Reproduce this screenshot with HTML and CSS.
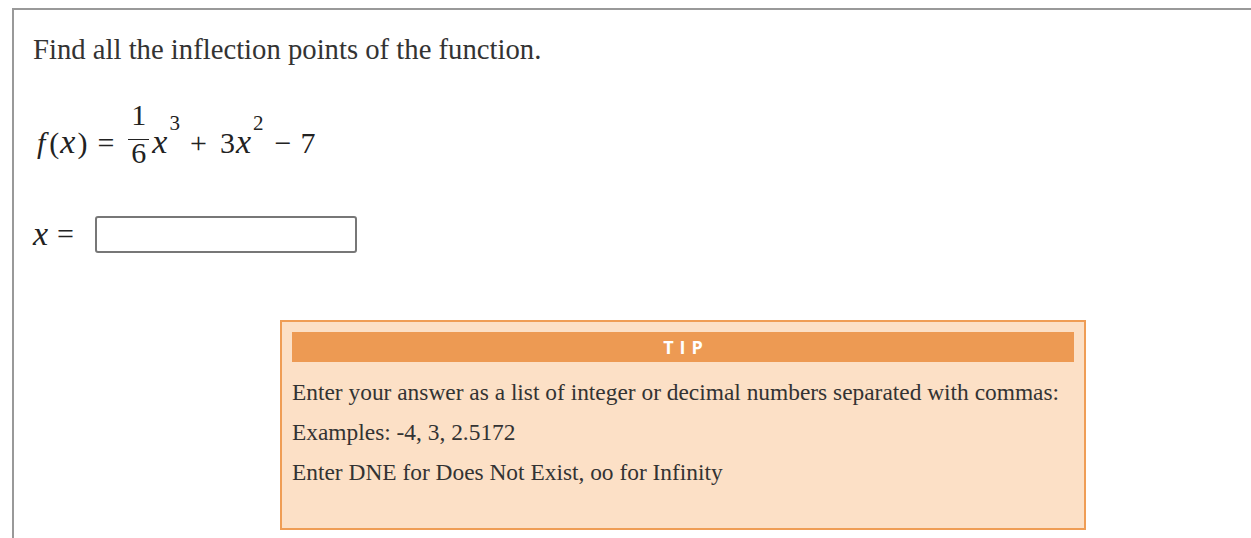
FILE: index.html
```html
<!DOCTYPE html>
<html>
<head>
<meta charset="utf-8">
<link rel="stylesheet" href="styles.css">
</head>
<body>
<div class="outer">
  <p class="question">Find all the inflection points of the function.</p>
  <div class="math eq"><span class="mi f">f</span><span class="mo lp">(</span><span class="mi xv xa">x</span><span class="mo rp">)</span><span class="rel">=</span><span class="frac"><span class="num">1</span><span class="bar"></span><span class="den">6</span></span><span class="mi xv x1">x</span><span class="sup s3">3</span><span class="bin plus">+</span><span class="mn">3</span><span class="mi xv x2">x</span><span class="sup s2">2</span><span class="bin minus">−</span><span class="mn">7</span></div>
  <div class="math answer">
    <span class="mi xv ax">x</span><span class="rel arel">=</span>
    <input class="field" type="text">
  </div>
  <div class="tip">
    <div class="tip-head">TIP</div>
    <p class="tip-line">Enter your answer as a list of integer or decimal numbers separated with commas:</p>
    <p class="tip-line">Examples: -4, 3, 2.5172</p>
    <p class="tip-line">Enter DNE for Does Not Exist, oo for Infinity</p>
  </div>
</div>
</body>
</html>
```
FILE: styles.css
```css
html, body {
  margin: 0;
  padding: 0;
  background: #fff;
}
body {
  font-family: "Liberation Serif", "Times New Roman", serif;
  color: #333;
  overflow: hidden;
}
.outer {
  margin: 8px 0 0 12px;
  border: 2px solid #999;
  border-right: none;
  border-bottom: none;
  height: 600px;
  padding: 22px 0 0 19px;
}
.question {
  margin: 0;
  font-size: 28.7px;
  line-height: 34px;
  white-space: nowrap;
}
.math {
  font-family: "Liberation Serif", "Times New Roman", serif;
  font-size: 30px;
  color: #222;
}
.eq {
  margin-top: 36px;
  line-height: 40px;
  white-space: nowrap;
  padding-left: 4px;
}
.mi {
  font-style: italic;
}
.xv {
  font-size: 34px;
}
.f { margin-right: 4px; }
.xa { margin-left: 1px; }
.rp { margin-left: 2px; }
.rel {
  margin: 0 14px 0 10px;
}
.frac {
  display: inline-block;
  vertical-align: -10px;
  text-align: center;
  margin-right: 2px;
}
.num, .den {
  display: block;
  line-height: 26px;
  padding: 0 3px;
}
.num { padding-bottom: 11px; }
.bar {
  display: block;
  height: 1px;
  background: #222;
}
.x1, .x2 {
  margin-left: 1px;
  margin-right: 2px;
}
.sup {
  font-size: 21px;
  line-height: 21px;
  vertical-align: 23px;
}
.plus { margin: 0 13px 0 10px; }
.minus { margin: 0 9px 0 11px; }
.answer {
  margin-top: 49px;
  display: flex;
  align-items: center;
}
.arel {
  margin: 0 21px 0 9px;
}
.field {
  width: 258px;
  height: 33px;
  border: 2px solid #777;
  border-radius: 3px;
  box-sizing: content-box;
  padding: 0;
  margin: 0;
  background: #fff;
}
.tip {
  margin: 67px 0 0 247px;
  width: 782px;
  height: 186px;
  border: 2px solid #ef9d55;
  background: #fce0c6;
  padding: 10px;
}
.tip-head {
  height: 30px;
  background: #ed9a53;
  color: #fff;
  font-family: "Open Sans", "Liberation Sans", sans-serif;
  font-weight: 700;
  font-size: 18px;
  letter-spacing: 6px;
  padding-left: 6px;
  text-align: center;
  line-height: 30px;
  margin-bottom: 10px;
}
.tip-line {
  margin: 0;
  font-size: 23.4px;
  line-height: 40px;
  white-space: nowrap;
}
```
